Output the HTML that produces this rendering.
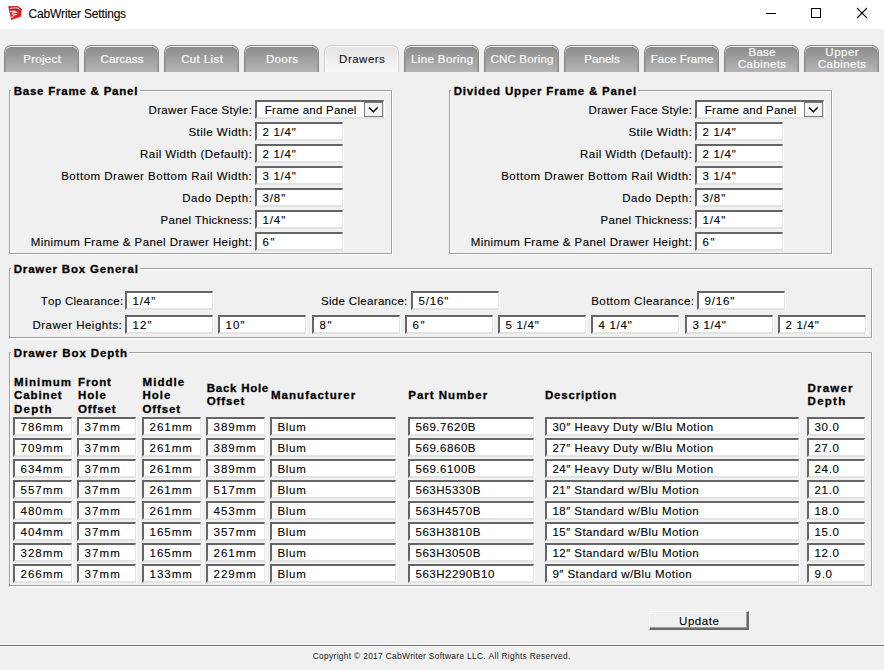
<!DOCTYPE html>
<html><head><meta charset="utf-8"><style>
html,body{margin:0;padding:0;}
body{width:884px;height:670px;overflow:hidden;background:#f0f0f0;position:relative;font-family:"Liberation Sans",sans-serif;color:#000;}
.t{position:absolute;white-space:pre;line-height:13px;font-kerning:none;-webkit-text-stroke:0.1px #000;}
.r{position:absolute;}
.tb{position:absolute;background:#fff;border-style:solid;border-width:2px 1px 2px 2px;border-color:#656565 #e3e3e3 #e3e3e3 #656565;box-shadow:1px 0 0 #fff;}
.gbg{position:absolute;border:1px solid #a0a0a0;}
.gbw{position:absolute;border:1px solid #fff;}
.ddb{position:absolute;width:17px;height:13px;border:1px solid #7a7a7a;background:#f4f4f4;}
.tab{position:absolute;width:73px;height:26px;border:1px solid #8a8a8a;border-bottom:none;border-radius:7px 7px 0 0;
 background:linear-gradient(#8a8a8a,#9e9e9e 45%,#b6b6b6);box-shadow:inset 0 1px 0 #f6f6f6, inset 1px 0 0 #9a9a9a, inset -1px 0 0 #9a9a9a;}
.tab.act{border-color:#cdcdcd;background:linear-gradient(#e2e2e2,#f0f0f0 60%,#f8f8f8);box-shadow:inset 0 1px 0 #fff, inset 1px 0 0 #fff, inset -1px 0 0 #fff;}
.btn{position:absolute;background:#f0f0f0;border-style:solid;border-width:1px 2px 2px 1px;border-color:#fff #696969 #696969 #fff;box-shadow:inset -1px -1px 0 #a0a0a0;}
</style></head><body>
<div class="r" style="left:0px;top:0px;width:884px;height:29px;background:#fff;"></div>
<svg class="r" style="left:0px;top:0px" width="28" height="28" viewBox="0 0 28 28">
<path d="M8.2 6.6 L17.8 6.2 L21.8 9.2 L20.8 16.8 L11.2 20 Z" fill="#dc1f26"/>
<path d="M8.2 6.6 L17.8 6.2 L21.8 9.2 L11.6 10 Z" fill="#a8121a"/>
<path d="M9.6 8.2 L17.2 7.8 L19.6 9.4" fill="none" stroke="#fff" stroke-width="1.1" opacity="0.85"/>
<path d="M10 11.6 L14.6 11.2 L16.4 12.4 L12.4 13.2 L13.2 15 L16.8 14.6" fill="none" stroke="#fff" stroke-width="1.3" opacity="0.8"/>
<path d="M11 17.2 L13.6 16.8" fill="none" stroke="#fff" stroke-width="1.2" opacity="0.7"/>
</svg>
<div class="t" style="left:28.50px;top:7.50px;font-size:12px;letter-spacing:-0.181px;">CabWriter Settings</div>
<div class="r" style="left:766px;top:13px;width:10px;height:1px;background:#000;"></div>
<div class="r" style="left:811px;top:8px;width:8px;height:8px;border:1px solid #000"></div>
<svg class="r" style="left:856px;top:7px" width="12" height="12" viewBox="0 0 12 12">
<path d="M1 1 L11 11 M11 1 L1 11" stroke="#000" stroke-width="1.1"/></svg>
<div class="tab" style="left:4px;top:45px"></div>
<div class="t" style="left:23.18px;top:53.00px;font-size:11.5px;letter-spacing:0.312px;color:#f8f8f6;-webkit-text-stroke:0.2px #fff;">Project</div>
<div class="tab" style="left:84px;top:45px"></div>
<div class="t" style="left:100.52px;top:53.00px;font-size:11.5px;letter-spacing:0.130px;color:#f8f8f6;-webkit-text-stroke:0.2px #fff;">Carcass</div>
<div class="tab" style="left:164px;top:45px"></div>
<div class="t" style="left:181.15px;top:53.00px;font-size:11.5px;letter-spacing:0.391px;color:#f8f8f6;-webkit-text-stroke:0.2px #fff;">Cut List</div>
<div class="tab" style="left:244px;top:45px"></div>
<div class="t" style="left:265.91px;top:53.00px;font-size:11.5px;letter-spacing:0.377px;color:#f8f8f6;-webkit-text-stroke:0.2px #fff;">Doors</div>
<div class="tab act" style="left:324px;top:45px"></div>
<div class="t" style="left:339.12px;top:53.00px;font-size:11.5px;letter-spacing:0.490px;color:#1a1a24;">Drawers</div>
<div class="tab" style="left:404px;top:45px"></div>
<div class="t" style="left:410.89px;top:53.00px;font-size:11.5px;letter-spacing:0.403px;color:#f8f8f6;-webkit-text-stroke:0.2px #fff;">Line Boring</div>
<div class="tab" style="left:484px;top:45px"></div>
<div class="t" style="left:490.55px;top:53.00px;font-size:11.5px;letter-spacing:0.169px;color:#f8f8f6;-webkit-text-stroke:0.2px #fff;">CNC Boring</div>
<div class="tab" style="left:564px;top:45px"></div>
<div class="t" style="left:584.30px;top:53.00px;font-size:11.5px;letter-spacing:0.049px;color:#f8f8f6;-webkit-text-stroke:0.2px #fff;">Panels</div>
<div class="tab" style="left:644px;top:45px"></div>
<div class="t" style="left:650.68px;top:53.00px;font-size:11.5px;letter-spacing:0.070px;color:#f8f8f6;-webkit-text-stroke:0.2px #fff;">Face Frame</div>
<div class="tab" style="left:724px;top:45px"></div>
<div class="t" style="left:748.61px;top:46.00px;font-size:11.5px;letter-spacing:0.183px;color:#f8f8f6;-webkit-text-stroke:0.2px #fff;">Base</div>
<div class="t" style="left:737.88px;top:58.40px;font-size:11.5px;letter-spacing:0.408px;color:#f8f8f6;-webkit-text-stroke:0.2px #fff;">Cabinets</div>
<div class="tab" style="left:804px;top:45px"></div>
<div class="t" style="left:825.35px;top:46.00px;font-size:11.5px;letter-spacing:0.496px;color:#f8f8f6;-webkit-text-stroke:0.2px #fff;">Upper</div>
<div class="t" style="left:817.88px;top:58.40px;font-size:11.5px;letter-spacing:0.408px;color:#f8f8f6;-webkit-text-stroke:0.2px #fff;">Cabinets</div>
<div class="gbw" style="left:10px;top:91px;width:381px;height:162px"></div>
<div class="gbg" style="left:9px;top:90px;width:381px;height:162px"></div>
<div class="r" style="left:11px;top:87px;width:129px;height:6px;background:#f0f0f0;"></div>
<div class="t" style="left:13.70px;top:85.00px;font-size:11.5px;letter-spacing:0.776px;font-weight:bold;-webkit-text-stroke:0.3px #000;">Base Frame &amp; Panel</div>
<div class="t" style="left:148.58px;top:104.00px;font-size:11.5px;letter-spacing:0.322px;">Drawer Face Style:</div>
<div class="tb" style="left:255px;top:100px;width:126px;height:15px"></div>
<div class="t" style="left:264.80px;top:104.00px;font-size:11.5px;letter-spacing:0.242px;">Frame and Panel</div>
<div class="ddb" style="left:364px;top:102px"></div>
<svg class="r" style="left:364px;top:102px" width="19" height="16" viewBox="0 0 19 16"><path d="M5 5.5 L9.3 9.8 L13.6 5.5" fill="none" stroke="#000" stroke-width="1.5"/></svg>
<div class="t" style="left:188.46px;top:126.00px;font-size:11.5px;letter-spacing:0.474px;">Stile Width:</div>
<div class="tb" style="left:255px;top:122px;width:85px;height:15px"></div>
<div class="t" style="left:262.50px;top:126.00px;font-size:11.5px;letter-spacing:0.712px;">2 1/4&quot;</div>
<div class="t" style="left:140.11px;top:148.00px;font-size:11.5px;letter-spacing:0.442px;">Rail Width (Default):</div>
<div class="tb" style="left:255px;top:144px;width:85px;height:15px"></div>
<div class="t" style="left:262.50px;top:148.00px;font-size:11.5px;letter-spacing:0.712px;">2 1/4&quot;</div>
<div class="t" style="left:61.18px;top:170.00px;font-size:11.5px;letter-spacing:0.501px;">Bottom Drawer Bottom Rail Width:</div>
<div class="tb" style="left:255px;top:166px;width:85px;height:15px"></div>
<div class="t" style="left:262.50px;top:170.00px;font-size:11.5px;letter-spacing:0.712px;">3 1/4&quot;</div>
<div class="t" style="left:182.17px;top:192.00px;font-size:11.5px;letter-spacing:0.510px;">Dado Depth:</div>
<div class="tb" style="left:255px;top:188px;width:85px;height:15px"></div>
<div class="t" style="left:262.50px;top:192.00px;font-size:11.5px;letter-spacing:0.885px;">3/8&quot;</div>
<div class="t" style="left:160.55px;top:214.00px;font-size:11.5px;letter-spacing:0.261px;">Panel Thickness:</div>
<div class="tb" style="left:255px;top:210px;width:85px;height:15px"></div>
<div class="t" style="left:262.50px;top:214.00px;font-size:11.5px;letter-spacing:0.885px;">1/4&quot;</div>
<div class="t" style="left:30.73px;top:236.00px;font-size:11.5px;letter-spacing:0.420px;">Minimum Frame &amp; Panel Drawer Height:</div>
<div class="tb" style="left:255px;top:232px;width:85px;height:15px"></div>
<div class="t" style="left:262.50px;top:236.00px;font-size:11.5px;letter-spacing:1.542px;">6&quot;</div>
<div class="gbw" style="left:450px;top:91px;width:381px;height:162px"></div>
<div class="gbg" style="left:449px;top:90px;width:381px;height:162px"></div>
<div class="r" style="left:451px;top:87px;width:187px;height:6px;background:#f0f0f0;"></div>
<div class="t" style="left:453.70px;top:85.00px;font-size:11.5px;letter-spacing:0.821px;font-weight:bold;-webkit-text-stroke:0.3px #000;">Divided Upper Frame &amp; Panel</div>
<div class="t" style="left:588.58px;top:104.00px;font-size:11.5px;letter-spacing:0.322px;">Drawer Face Style:</div>
<div class="tb" style="left:695px;top:100px;width:126px;height:15px"></div>
<div class="t" style="left:704.80px;top:104.00px;font-size:11.5px;letter-spacing:0.242px;">Frame and Panel</div>
<div class="ddb" style="left:804px;top:102px"></div>
<svg class="r" style="left:804px;top:102px" width="19" height="16" viewBox="0 0 19 16"><path d="M5 5.5 L9.3 9.8 L13.6 5.5" fill="none" stroke="#000" stroke-width="1.5"/></svg>
<div class="t" style="left:628.46px;top:126.00px;font-size:11.5px;letter-spacing:0.474px;">Stile Width:</div>
<div class="tb" style="left:695px;top:122px;width:85px;height:15px"></div>
<div class="t" style="left:702.50px;top:126.00px;font-size:11.5px;letter-spacing:0.712px;">2 1/4&quot;</div>
<div class="t" style="left:580.11px;top:148.00px;font-size:11.5px;letter-spacing:0.442px;">Rail Width (Default):</div>
<div class="tb" style="left:695px;top:144px;width:85px;height:15px"></div>
<div class="t" style="left:702.50px;top:148.00px;font-size:11.5px;letter-spacing:0.712px;">2 1/4&quot;</div>
<div class="t" style="left:501.18px;top:170.00px;font-size:11.5px;letter-spacing:0.501px;">Bottom Drawer Bottom Rail Width:</div>
<div class="tb" style="left:695px;top:166px;width:85px;height:15px"></div>
<div class="t" style="left:702.50px;top:170.00px;font-size:11.5px;letter-spacing:0.712px;">3 1/4&quot;</div>
<div class="t" style="left:622.17px;top:192.00px;font-size:11.5px;letter-spacing:0.510px;">Dado Depth:</div>
<div class="tb" style="left:695px;top:188px;width:85px;height:15px"></div>
<div class="t" style="left:702.50px;top:192.00px;font-size:11.5px;letter-spacing:0.885px;">3/8&quot;</div>
<div class="t" style="left:600.55px;top:214.00px;font-size:11.5px;letter-spacing:0.261px;">Panel Thickness:</div>
<div class="tb" style="left:695px;top:210px;width:85px;height:15px"></div>
<div class="t" style="left:702.50px;top:214.00px;font-size:11.5px;letter-spacing:0.885px;">1/4&quot;</div>
<div class="t" style="left:470.72px;top:236.00px;font-size:11.5px;letter-spacing:0.420px;">Minimum Frame &amp; Panel Drawer Height:</div>
<div class="tb" style="left:695px;top:232px;width:85px;height:15px"></div>
<div class="t" style="left:702.50px;top:236.00px;font-size:11.5px;letter-spacing:1.542px;">6&quot;</div>
<div class="gbw" style="left:10px;top:269px;width:861px;height:68px"></div>
<div class="gbg" style="left:9px;top:268px;width:861px;height:68px"></div>
<div class="r" style="left:11px;top:265px;width:129px;height:6px;background:#f0f0f0;"></div>
<div class="t" style="left:13.70px;top:263.00px;font-size:11.5px;letter-spacing:0.837px;font-weight:bold;-webkit-text-stroke:0.3px #000;">Drawer Box General</div>
<div class="t" style="left:40.74px;top:295.00px;font-size:11.5px;letter-spacing:0.288px;">Top Clearance:</div>
<div class="tb" style="left:125px;top:291px;width:85px;height:15px"></div>
<div class="t" style="left:132.50px;top:295.00px;font-size:11.5px;letter-spacing:0.885px;">1/4&quot;</div>
<div class="t" style="left:321.01px;top:295.00px;font-size:11.5px;letter-spacing:0.321px;">Side Clearance:</div>
<div class="tb" style="left:411px;top:291px;width:85px;height:15px"></div>
<div class="t" style="left:418.50px;top:295.00px;font-size:11.5px;letter-spacing:0.815px;">5/16&quot;</div>
<div class="t" style="left:591.15px;top:295.00px;font-size:11.5px;letter-spacing:0.477px;">Bottom Clearance:</div>
<div class="tb" style="left:697px;top:291px;width:85px;height:15px"></div>
<div class="t" style="left:704.50px;top:295.00px;font-size:11.5px;letter-spacing:0.815px;">9/16&quot;</div>
<div class="t" style="left:32.48px;top:319.00px;font-size:11.5px;letter-spacing:0.493px;">Drawer Heights:</div>
<div class="tb" style="left:125px;top:315px;width:85px;height:15px"></div>
<div class="t" style="left:132.50px;top:319.00px;font-size:11.5px;letter-spacing:1.072px;">12&quot;</div>
<div class="tb" style="left:218px;top:315px;width:85px;height:15px"></div>
<div class="t" style="left:225.50px;top:319.00px;font-size:11.5px;letter-spacing:1.072px;">10&quot;</div>
<div class="tb" style="left:312px;top:315px;width:85px;height:15px"></div>
<div class="t" style="left:319.50px;top:319.00px;font-size:11.5px;letter-spacing:1.542px;">8&quot;</div>
<div class="tb" style="left:405px;top:315px;width:85px;height:15px"></div>
<div class="t" style="left:412.50px;top:319.00px;font-size:11.5px;letter-spacing:1.542px;">6&quot;</div>
<div class="tb" style="left:498px;top:315px;width:85px;height:15px"></div>
<div class="t" style="left:505.50px;top:319.00px;font-size:11.5px;letter-spacing:0.712px;">5 1/4&quot;</div>
<div class="tb" style="left:591px;top:315px;width:85px;height:15px"></div>
<div class="t" style="left:598.50px;top:319.00px;font-size:11.5px;letter-spacing:0.712px;">4 1/4&quot;</div>
<div class="tb" style="left:685px;top:315px;width:85px;height:15px"></div>
<div class="t" style="left:692.50px;top:319.00px;font-size:11.5px;letter-spacing:0.712px;">3 1/4&quot;</div>
<div class="tb" style="left:778px;top:315px;width:85px;height:15px"></div>
<div class="t" style="left:785.50px;top:319.00px;font-size:11.5px;letter-spacing:0.712px;">2 1/4&quot;</div>
<div class="gbw" style="left:10px;top:353px;width:861px;height:232px"></div>
<div class="gbg" style="left:9px;top:352px;width:861px;height:232px"></div>
<div class="r" style="left:11px;top:349px;width:118px;height:6px;background:#f0f0f0;"></div>
<div class="t" style="left:13.70px;top:347.00px;font-size:11.5px;letter-spacing:0.908px;font-weight:bold;-webkit-text-stroke:0.3px #000;">Drawer Box Depth</div>
<div class="t" style="left:14.00px;top:376.00px;font-size:11.5px;letter-spacing:1.096px;font-weight:bold;-webkit-text-stroke:0.3px #000;">Minimum</div>
<div class="t" style="left:14.00px;top:389.30px;font-size:11.5px;letter-spacing:0.920px;font-weight:bold;-webkit-text-stroke:0.3px #000;">Cabinet</div>
<div class="t" style="left:14.00px;top:402.60px;font-size:11.5px;letter-spacing:1.251px;font-weight:bold;-webkit-text-stroke:0.3px #000;">Depth</div>
<div class="t" style="left:78.00px;top:376.00px;font-size:11.5px;letter-spacing:0.875px;font-weight:bold;-webkit-text-stroke:0.3px #000;">Front</div>
<div class="t" style="left:78.00px;top:389.30px;font-size:11.5px;letter-spacing:1.017px;font-weight:bold;-webkit-text-stroke:0.3px #000;">Hole</div>
<div class="t" style="left:78.00px;top:402.60px;font-size:11.5px;letter-spacing:0.860px;font-weight:bold;-webkit-text-stroke:0.3px #000;">Offset</div>
<div class="t" style="left:142.50px;top:376.00px;font-size:11.5px;letter-spacing:1.051px;font-weight:bold;-webkit-text-stroke:0.3px #000;">Middle</div>
<div class="t" style="left:142.50px;top:389.30px;font-size:11.5px;letter-spacing:1.017px;font-weight:bold;-webkit-text-stroke:0.3px #000;">Hole</div>
<div class="t" style="left:142.50px;top:402.60px;font-size:11.5px;letter-spacing:0.860px;font-weight:bold;-webkit-text-stroke:0.3px #000;">Offset</div>
<div class="t" style="left:206.80px;top:382.00px;font-size:11.5px;letter-spacing:0.730px;font-weight:bold;-webkit-text-stroke:0.3px #000;">Back Hole</div>
<div class="t" style="left:206.80px;top:395.30px;font-size:11.5px;letter-spacing:0.860px;font-weight:bold;-webkit-text-stroke:0.3px #000;">Offset</div>
<div class="t" style="left:271.00px;top:389.00px;font-size:11.5px;letter-spacing:1.026px;font-weight:bold;-webkit-text-stroke:0.3px #000;">Manufacturer</div>
<div class="t" style="left:408.30px;top:389.00px;font-size:11.5px;letter-spacing:0.992px;font-weight:bold;-webkit-text-stroke:0.3px #000;">Part Number</div>
<div class="t" style="left:545.00px;top:389.00px;font-size:11.5px;letter-spacing:0.791px;font-weight:bold;-webkit-text-stroke:0.3px #000;">Description</div>
<div class="t" style="left:807.60px;top:382.00px;font-size:11.5px;letter-spacing:1.201px;font-weight:bold;-webkit-text-stroke:0.3px #000;">Drawer</div>
<div class="t" style="left:807.60px;top:395.30px;font-size:11.5px;letter-spacing:1.251px;font-weight:bold;-webkit-text-stroke:0.3px #000;">Depth</div>
<div class="tb" style="left:13px;top:417px;width:56px;height:15px"></div>
<div class="t" style="left:20.50px;top:421.00px;font-size:11.5px;letter-spacing:1.019px;">786mm</div>
<div class="tb" style="left:77px;top:417px;width:56px;height:15px"></div>
<div class="t" style="left:84.50px;top:421.00px;font-size:11.5px;letter-spacing:1.158px;">37mm</div>
<div class="tb" style="left:142px;top:417px;width:56px;height:15px"></div>
<div class="t" style="left:149.50px;top:421.00px;font-size:11.5px;letter-spacing:1.019px;">261mm</div>
<div class="tb" style="left:206px;top:417px;width:56px;height:15px"></div>
<div class="t" style="left:213.50px;top:421.00px;font-size:11.5px;letter-spacing:1.019px;">389mm</div>
<div class="tb" style="left:270px;top:417px;width:123px;height:15px"></div>
<div class="t" style="left:277.50px;top:421.00px;font-size:11.5px;letter-spacing:0.695px;">Blum</div>
<div class="tb" style="left:408px;top:417px;width:123px;height:15px"></div>
<div class="t" style="left:415.50px;top:421.00px;font-size:11.5px;letter-spacing:0.550px;">569.7620B</div>
<div class="tb" style="left:545px;top:417px;width:251px;height:15px"></div>
<div class="t" style="left:552.50px;top:421.00px;font-size:11.5px;letter-spacing:0.468px;">30″ Heavy Duty w/Blu Motion</div>
<div class="tb" style="left:807px;top:417px;width:55px;height:15px"></div>
<div class="t" style="left:814.50px;top:421.00px;font-size:11.5px;letter-spacing:0.695px;">30.0</div>
<div class="tb" style="left:13px;top:438px;width:56px;height:15px"></div>
<div class="t" style="left:20.50px;top:442.00px;font-size:11.5px;letter-spacing:1.019px;">709mm</div>
<div class="tb" style="left:77px;top:438px;width:56px;height:15px"></div>
<div class="t" style="left:84.50px;top:442.00px;font-size:11.5px;letter-spacing:1.158px;">37mm</div>
<div class="tb" style="left:142px;top:438px;width:56px;height:15px"></div>
<div class="t" style="left:149.50px;top:442.00px;font-size:11.5px;letter-spacing:1.019px;">261mm</div>
<div class="tb" style="left:206px;top:438px;width:56px;height:15px"></div>
<div class="t" style="left:213.50px;top:442.00px;font-size:11.5px;letter-spacing:1.019px;">389mm</div>
<div class="tb" style="left:270px;top:438px;width:123px;height:15px"></div>
<div class="t" style="left:277.50px;top:442.00px;font-size:11.5px;letter-spacing:0.695px;">Blum</div>
<div class="tb" style="left:408px;top:438px;width:123px;height:15px"></div>
<div class="t" style="left:415.50px;top:442.00px;font-size:11.5px;letter-spacing:0.550px;">569.6860B</div>
<div class="tb" style="left:545px;top:438px;width:251px;height:15px"></div>
<div class="t" style="left:552.50px;top:442.00px;font-size:11.5px;letter-spacing:0.468px;">27″ Heavy Duty w/Blu Motion</div>
<div class="tb" style="left:807px;top:438px;width:55px;height:15px"></div>
<div class="t" style="left:814.50px;top:442.00px;font-size:11.5px;letter-spacing:0.695px;">27.0</div>
<div class="tb" style="left:13px;top:459px;width:56px;height:15px"></div>
<div class="t" style="left:20.50px;top:463.00px;font-size:11.5px;letter-spacing:1.019px;">634mm</div>
<div class="tb" style="left:77px;top:459px;width:56px;height:15px"></div>
<div class="t" style="left:84.50px;top:463.00px;font-size:11.5px;letter-spacing:1.158px;">37mm</div>
<div class="tb" style="left:142px;top:459px;width:56px;height:15px"></div>
<div class="t" style="left:149.50px;top:463.00px;font-size:11.5px;letter-spacing:1.019px;">261mm</div>
<div class="tb" style="left:206px;top:459px;width:56px;height:15px"></div>
<div class="t" style="left:213.50px;top:463.00px;font-size:11.5px;letter-spacing:1.019px;">389mm</div>
<div class="tb" style="left:270px;top:459px;width:123px;height:15px"></div>
<div class="t" style="left:277.50px;top:463.00px;font-size:11.5px;letter-spacing:0.695px;">Blum</div>
<div class="tb" style="left:408px;top:459px;width:123px;height:15px"></div>
<div class="t" style="left:415.50px;top:463.00px;font-size:11.5px;letter-spacing:0.550px;">569.6100B</div>
<div class="tb" style="left:545px;top:459px;width:251px;height:15px"></div>
<div class="t" style="left:552.50px;top:463.00px;font-size:11.5px;letter-spacing:0.468px;">24″ Heavy Duty w/Blu Motion</div>
<div class="tb" style="left:807px;top:459px;width:55px;height:15px"></div>
<div class="t" style="left:814.50px;top:463.00px;font-size:11.5px;letter-spacing:0.695px;">24.0</div>
<div class="tb" style="left:13px;top:480px;width:56px;height:15px"></div>
<div class="t" style="left:20.50px;top:484.00px;font-size:11.5px;letter-spacing:1.019px;">557mm</div>
<div class="tb" style="left:77px;top:480px;width:56px;height:15px"></div>
<div class="t" style="left:84.50px;top:484.00px;font-size:11.5px;letter-spacing:1.158px;">37mm</div>
<div class="tb" style="left:142px;top:480px;width:56px;height:15px"></div>
<div class="t" style="left:149.50px;top:484.00px;font-size:11.5px;letter-spacing:1.019px;">261mm</div>
<div class="tb" style="left:206px;top:480px;width:56px;height:15px"></div>
<div class="t" style="left:213.50px;top:484.00px;font-size:11.5px;letter-spacing:1.019px;">517mm</div>
<div class="tb" style="left:270px;top:480px;width:123px;height:15px"></div>
<div class="t" style="left:277.50px;top:484.00px;font-size:11.5px;letter-spacing:0.695px;">Blum</div>
<div class="tb" style="left:408px;top:480px;width:123px;height:15px"></div>
<div class="t" style="left:415.50px;top:484.00px;font-size:11.5px;letter-spacing:0.509px;">563H5330B</div>
<div class="tb" style="left:545px;top:480px;width:251px;height:15px"></div>
<div class="t" style="left:552.50px;top:484.00px;font-size:11.5px;letter-spacing:0.434px;">21″ Standard w/Blu Motion</div>
<div class="tb" style="left:807px;top:480px;width:55px;height:15px"></div>
<div class="t" style="left:814.50px;top:484.00px;font-size:11.5px;letter-spacing:0.695px;">21.0</div>
<div class="tb" style="left:13px;top:501px;width:56px;height:15px"></div>
<div class="t" style="left:20.50px;top:505.00px;font-size:11.5px;letter-spacing:1.019px;">480mm</div>
<div class="tb" style="left:77px;top:501px;width:56px;height:15px"></div>
<div class="t" style="left:84.50px;top:505.00px;font-size:11.5px;letter-spacing:1.158px;">37mm</div>
<div class="tb" style="left:142px;top:501px;width:56px;height:15px"></div>
<div class="t" style="left:149.50px;top:505.00px;font-size:11.5px;letter-spacing:1.019px;">261mm</div>
<div class="tb" style="left:206px;top:501px;width:56px;height:15px"></div>
<div class="t" style="left:213.50px;top:505.00px;font-size:11.5px;letter-spacing:1.019px;">453mm</div>
<div class="tb" style="left:270px;top:501px;width:123px;height:15px"></div>
<div class="t" style="left:277.50px;top:505.00px;font-size:11.5px;letter-spacing:0.695px;">Blum</div>
<div class="tb" style="left:408px;top:501px;width:123px;height:15px"></div>
<div class="t" style="left:415.50px;top:505.00px;font-size:11.5px;letter-spacing:0.509px;">563H4570B</div>
<div class="tb" style="left:545px;top:501px;width:251px;height:15px"></div>
<div class="t" style="left:552.50px;top:505.00px;font-size:11.5px;letter-spacing:0.434px;">18″ Standard w/Blu Motion</div>
<div class="tb" style="left:807px;top:501px;width:55px;height:15px"></div>
<div class="t" style="left:814.50px;top:505.00px;font-size:11.5px;letter-spacing:0.695px;">18.0</div>
<div class="tb" style="left:13px;top:522px;width:56px;height:15px"></div>
<div class="t" style="left:20.50px;top:526.00px;font-size:11.5px;letter-spacing:1.019px;">404mm</div>
<div class="tb" style="left:77px;top:522px;width:56px;height:15px"></div>
<div class="t" style="left:84.50px;top:526.00px;font-size:11.5px;letter-spacing:1.158px;">37mm</div>
<div class="tb" style="left:142px;top:522px;width:56px;height:15px"></div>
<div class="t" style="left:149.50px;top:526.00px;font-size:11.5px;letter-spacing:1.019px;">165mm</div>
<div class="tb" style="left:206px;top:522px;width:56px;height:15px"></div>
<div class="t" style="left:213.50px;top:526.00px;font-size:11.5px;letter-spacing:1.019px;">357mm</div>
<div class="tb" style="left:270px;top:522px;width:123px;height:15px"></div>
<div class="t" style="left:277.50px;top:526.00px;font-size:11.5px;letter-spacing:0.695px;">Blum</div>
<div class="tb" style="left:408px;top:522px;width:123px;height:15px"></div>
<div class="t" style="left:415.50px;top:526.00px;font-size:11.5px;letter-spacing:0.509px;">563H3810B</div>
<div class="tb" style="left:545px;top:522px;width:251px;height:15px"></div>
<div class="t" style="left:552.50px;top:526.00px;font-size:11.5px;letter-spacing:0.434px;">15″ Standard w/Blu Motion</div>
<div class="tb" style="left:807px;top:522px;width:55px;height:15px"></div>
<div class="t" style="left:814.50px;top:526.00px;font-size:11.5px;letter-spacing:0.695px;">15.0</div>
<div class="tb" style="left:13px;top:543px;width:56px;height:15px"></div>
<div class="t" style="left:20.50px;top:547.00px;font-size:11.5px;letter-spacing:1.019px;">328mm</div>
<div class="tb" style="left:77px;top:543px;width:56px;height:15px"></div>
<div class="t" style="left:84.50px;top:547.00px;font-size:11.5px;letter-spacing:1.158px;">37mm</div>
<div class="tb" style="left:142px;top:543px;width:56px;height:15px"></div>
<div class="t" style="left:149.50px;top:547.00px;font-size:11.5px;letter-spacing:1.019px;">165mm</div>
<div class="tb" style="left:206px;top:543px;width:56px;height:15px"></div>
<div class="t" style="left:213.50px;top:547.00px;font-size:11.5px;letter-spacing:1.019px;">261mm</div>
<div class="tb" style="left:270px;top:543px;width:123px;height:15px"></div>
<div class="t" style="left:277.50px;top:547.00px;font-size:11.5px;letter-spacing:0.695px;">Blum</div>
<div class="tb" style="left:408px;top:543px;width:123px;height:15px"></div>
<div class="t" style="left:415.50px;top:547.00px;font-size:11.5px;letter-spacing:0.509px;">563H3050B</div>
<div class="tb" style="left:545px;top:543px;width:251px;height:15px"></div>
<div class="t" style="left:552.50px;top:547.00px;font-size:11.5px;letter-spacing:0.434px;">12″ Standard w/Blu Motion</div>
<div class="tb" style="left:807px;top:543px;width:55px;height:15px"></div>
<div class="t" style="left:814.50px;top:547.00px;font-size:11.5px;letter-spacing:0.695px;">12.0</div>
<div class="tb" style="left:13px;top:564px;width:56px;height:15px"></div>
<div class="t" style="left:20.50px;top:568.00px;font-size:11.5px;letter-spacing:1.019px;">266mm</div>
<div class="tb" style="left:77px;top:564px;width:56px;height:15px"></div>
<div class="t" style="left:84.50px;top:568.00px;font-size:11.5px;letter-spacing:1.158px;">37mm</div>
<div class="tb" style="left:142px;top:564px;width:56px;height:15px"></div>
<div class="t" style="left:149.50px;top:568.00px;font-size:11.5px;letter-spacing:1.019px;">133mm</div>
<div class="tb" style="left:206px;top:564px;width:56px;height:15px"></div>
<div class="t" style="left:213.50px;top:568.00px;font-size:11.5px;letter-spacing:1.019px;">229mm</div>
<div class="tb" style="left:270px;top:564px;width:123px;height:15px"></div>
<div class="t" style="left:277.50px;top:568.00px;font-size:11.5px;letter-spacing:0.695px;">Blum</div>
<div class="tb" style="left:408px;top:564px;width:123px;height:15px"></div>
<div class="t" style="left:415.50px;top:568.00px;font-size:11.5px;letter-spacing:0.525px;">563H2290B10</div>
<div class="tb" style="left:545px;top:564px;width:251px;height:15px"></div>
<div class="t" style="left:552.50px;top:568.00px;font-size:11.5px;letter-spacing:0.427px;">9″ Standard w/Blu Motion</div>
<div class="tb" style="left:807px;top:564px;width:55px;height:15px"></div>
<div class="t" style="left:814.50px;top:568.00px;font-size:11.5px;letter-spacing:0.741px;">9.0</div>
<div class="btn" style="left:649px;top:611px;width:97px;height:16px"></div>
<div class="t" style="left:679.08px;top:615.20px;font-size:11.5px;letter-spacing:0.546px;">Update</div>
<div class="r" style="left:0px;top:644px;width:884px;height:1px;background:#f8f8f8;"></div>
<div class="r" style="left:0px;top:645px;width:884px;height:1px;background:#6a6a6a;"></div>
<div class="r" style="left:0px;top:646px;width:884px;height:1px;background:#fafafa;"></div>
<div class="t" style="left:312.75px;top:649.80px;font-size:8.4px;letter-spacing:0.312px;color:#1a1a1a;-webkit-text-stroke:0;">Copyright © 2017 CabWriter Software LLC. All Rights Reserved.</div>
</body></html>
